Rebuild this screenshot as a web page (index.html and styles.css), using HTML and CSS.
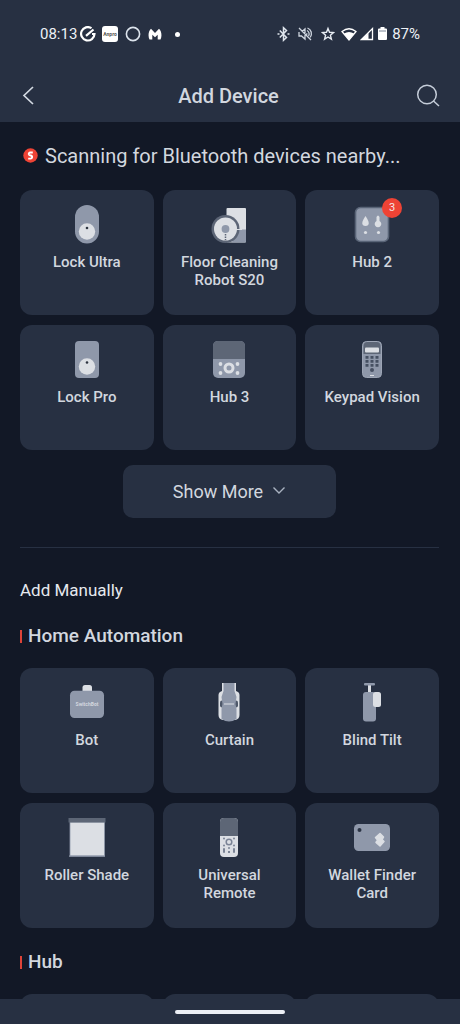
FILE: index.html
```html
<!DOCTYPE html>
<html lang="en">
<head>
<meta charset="utf-8">
<meta name="viewport" content="width=device-width, initial-scale=1">
<title>Add Device</title>
<link rel="stylesheet" href="styles.css">
</head>
<body>
<div class="app">
  <header class="top">
    <div class="status">
      <div class="status-group">
        <span class="clock">08:13</span>
        <svg width="16" height="16" viewBox="0 0 16 16" fill="none" stroke="#fff" stroke-width="2.200"><path d="M11.500 2.200A6.700 6.700 0 1 0 14.500 8H12M6 9.800l7.500-6.300"/></svg>
        <svg class="app-badge" width="16" height="16" viewBox="0 0 16 16"><rect width="16" height="16" rx="3" fill="#fff"/><text x="8" y="10" class="badge-word">Anpro</text></svg>
        <svg class="ring" width="16" height="16" viewBox="0 0 16 16" fill="none" stroke="#dce3ec" stroke-width="1.600"><circle cx="8" cy="8" r="6.600"/></svg>
        <svg width="14" height="16" viewBox="0 0 14 16"><path fill="#fff" d="M1.500 13.500C-.2 10 .4 5.200 3 2.800L7 7l4-4.200c2.600 2.400 3.200 7.200 1.500 10.700H9.700V8.800L7 11.300 4.300 8.800v4.700z"/></svg>
        <span class="more-dot"></span>
      </div>
      <div class="status-group">
        <svg width="13" height="16" viewBox="0 0 13 16" fill="none" stroke="#dfe5ed" stroke-width="1.500"><path d="M2.800 4.500l6.700 7L6.500 14.200V1.800l3 2.700-6.700 7M.5 8h2M10.500 8h2"/></svg>
        <svg class="mute" width="16" height="16" viewBox="0 0 16 16" fill="none" stroke="#cfd6e0" stroke-width="1.300"><path d="M2 2l12 12M2 6v4h2.500L8 13V9M5 5.500L8 3v4M10 4.500c2 1 2.800 3.500 1.600 5.500M10.500 2c4 1.500 5 6 2.700 9.300M9.800 7.300v1.500"/></svg>
        <svg class="star" width="14" height="16" viewBox="0 0 14 16" fill="none" stroke="#e6ebf2" stroke-width="1.400"><path d="M7 2.500l1.500 3.800 4 .3-3.100 2.600 1 4L7 11l-3.400 2.200 1-4L1.500 6.600l4-.3z"/></svg>
        <svg class="wifi" width="16" height="16" viewBox="0 0 16 16"><path d="M1 5.500Q8 0 15 5.500L8 14z" fill="none" stroke="#fff" stroke-width="1.300"/><path d="M3 7.500q5-3 10 0L8 14z" fill="#fff"/></svg>
        <svg width="14" height="16" viewBox="0 0 14 16"><path d="M12.500 2.500v11h-11z" fill="none" stroke="#fff" stroke-width="1.300"/><path d="M8.500 7v6.500h-7z" fill="#fff"/></svg>
        <svg class="battery" width="9" height="16" viewBox="0 0 9 16"><path d="M2.500 1h4v1.500h1.500q1 0 1 1V13q0 1-1 1H1q-1 0-1-1V3.500q0-1 1-1h1.500z" fill="#fff"/><path d="M1 5h7" stroke="#7a8596"/></svg>
        <span class="clock">87%</span>
      </div>
    </div>
    <div class="titlebar">
      <button class="icon-button" type="button" aria-label="Back"><svg width="24" height="24" viewBox="0 0 24 24" fill="none" stroke="#d3d9e2" stroke-width="1.700"><path d="M16 3L7 11.500l9 8.500"/></svg></button>
      <h1>Add Device</h1>
      <button class="icon-button" type="button" aria-label="Search"><svg width="24" height="24" viewBox="0 0 24 24" fill="none" stroke="#c5cdd9" stroke-width="1.500"><circle cx="11" cy="10.500" r="9.300"/><path d="M17.500 17l5.500 5"/></svg></button>
    </div>
  </header>

  <main class="content">
    <p class="scan">
      <svg width="15" height="16" viewBox="0 0 15 16"><circle cx="7.500" cy="7.500" r="7.200" fill="#ee4335"/><path d="M9.800 4.500H7.200Q5.600 4.700 5.800 6.200 6 7.300 7.600 7.500 9.300 7.800 9.100 9.300 8.900 10.500 7.500 10.600H5.200" fill="none" stroke="#fff" stroke-width="1.900"/></svg>
      <span>Scanning for Bluetooth devices nearby...</span>
    </p>

    <div class="grid">
      <button class="card" type="button">
        <svg class="art" viewBox="0 0 48 40"><rect x="12" y="1" width="24" height="38.500" rx="12" fill="#8f98aa"/><circle cx="24" cy="27.500" r="8.200" fill="#dcdfe4"/><circle cx="24" cy="24" r="1.300" fill="#2d3440"/></svg>
        <span>Lock Ultra</span>
      </button>
      <button class="card" type="button">
        <svg class="art" viewBox="0 0 48 40"><rect x="21.500" y="4" width="19.500" height="34.500" rx="1" fill="#dcdfe4"/><path d="M30 25.500h11v12q0 1-1 1H27z" fill="#8f98aa"/><circle cx="20.500" cy="25" r="14" fill="#5c6576"/><circle cx="20.500" cy="25" r="11.500" fill="#dcdfe4"/><circle cx="20.500" cy="25" r="3.900" fill="#8f98aa"/><path d="M20.500 30v6" stroke="#5c6576" stroke-width="1.500" stroke-dasharray="1.500 1"/><path d="M31 25.500h6" stroke="#dcdfe4" stroke-width="1"/></svg>
        <span>Floor Cleaning Robot S20</span>
      </button>
      <button class="card" type="button">
        <span class="art-wrap">
          <svg class="art" viewBox="0 0 48 40"><rect x="7.500" y="3.500" width="33" height="34" rx="5" fill="#8f98aa" stroke="#596477" stroke-width="1.600"/><path d="M17.500 12q-6.500 9.500 0 10 6.500-.5 0-10z" fill="#dcdfe4"/><path d="M28.500 17v-4q1.500-3 3 0v4a3.300 3.300 0 1 1-3 0z" fill="#dcdfe4"/><circle cx="17.500" cy="28.500" r="1.600" fill="#dcdfe4"/><circle cx="30.500" cy="28.500" r="1.600" fill="#dcdfe4"/></svg>
          <span class="count">3</span>
        </span>
        <span>Hub 2</span>
      </button>
      <button class="card" type="button">
        <svg class="art" viewBox="0 0 48 40"><rect x="12" y="2" width="24" height="37" rx="4" fill="#8f98aa"/><circle cx="24" cy="27.500" r="8.200" fill="#dcdfe4"/><circle cx="24" cy="23.500" r="1.300" fill="#2d3440"/></svg>
        <span>Lock Pro</span>
      </button>
      <button class="card" type="button">
        <svg class="art" viewBox="0 0 48 40"><rect x="8" y="2" width="32" height="37" rx="5" fill="#8f98aa"/><path d="M8 20V7q0-5 5-5h22q5 0 5 5v13z" fill="#5d6676"/><circle cx="24" cy="29" r="4" fill="none" stroke="#dcdfe4" stroke-width="3"/><g fill="#dcdfe4"><circle cx="15.500" cy="25" r="1.900"/><circle cx="32.500" cy="25" r="1.900"/><circle cx="15.500" cy="34" r="1.900"/><circle cx="32.500" cy="34" r="1.900"/></g></svg>
        <span>Hub 3</span>
      </button>
      <button class="card" type="button">
        <svg class="art" viewBox="0 0 48 40"><rect x="14.500" y="2.500" width="19" height="36" rx="4" fill="#8f98aa" stroke="#9da5b5"/><path d="M15.500 15V7q0-4 4-4h9q4 0 4 4v8z" fill="#5d6676"/><rect x="17" y="8.500" width="14" height="5" rx="1" fill="#dcdfe4"/><path d="M19 17v11M24 17v11M29 17v11" stroke="#465062" stroke-width="3" stroke-dasharray="2.800 1.200"/><circle cx="24" cy="31" r="2" fill="#465062"/><path d="M22 36.500h4" stroke="#dcdfe4"/></svg>
        <span>Keypad Vision</span>
      </button>
    </div>

    <button class="show-more" type="button">Show More
      <svg width="14" height="14" viewBox="0 0 14 14" fill="none" stroke="#a9b2c0" stroke-width="1.400"><path d="M1.500 2.500L7 8l5.500-5.500"/></svg>
    </button>

    <hr class="rule">

    <h2 class="manual">Add Manually</h2>
    <h3 class="section">Home Automation</h3>
    <div class="grid">
      <button class="card" type="button">
        <svg class="art" viewBox="0 0 48 40"><rect x="19.500" y="3" width="9.500" height="8" rx="2.500" fill="#dcdfe4"/><rect x="7" y="8.700" width="34" height="27.300" rx="4.500" fill="#8f98aa"/><text x="24" y="23.500" class="brand">SwitchBot</text></svg>
        <span>Bot</span>
      </button>
      <button class="card" type="button">
        <svg class="art" viewBox="0 0 48 40"><path d="M17 1h14v8q3.500 1 3.500 4v20q0 4-4 5h-13q-4-1-4-5V13q0-3 3.500-4z" fill="#dcdfe4"/><rect x="15" y="18.500" width="18" height="7" rx="2" fill="#4d5769"/><path d="M18.500 1h11v8l2 6-1 7 1 5v10q-7.500 5-15 0V27l1-5-1-7 2-6z" fill="#8f98aa"/><path d="M19 22h10" stroke="#c3c8d2" stroke-width="1.500"/></svg>
        <span>Curtain</span>
      </button>
      <button class="card" type="button">
        <svg class="art" viewBox="0 0 48 40"><path d="M21.500 3v8" stroke="#dcdfe4" stroke-width="3"/><rect x="16" y="1" width="11" height="2.500" rx="1" fill="#8f98aa"/><rect x="15" y="10" width="13" height="29.500" rx="3" fill="#8f98aa"/><rect x="25" y="10" width="8" height="15" rx="2.500" fill="#dcdfe4"/></svg>
        <span>Blind Tilt</span>
      </button>
      <button class="card" type="button">
        <svg class="art" viewBox="0 0 48 40"><rect x="7" y="5" width="34.500" height="34" fill="#dcdfe4" stroke="#8f98aa" stroke-width=".8"/><rect x="5.500" y="1" width="37" height="4.500" fill="#5d6676"/><path d="M6 39.200h36" stroke="#8f98aa" stroke-width="1.200"/></svg>
        <span>Roller Shade</span>
      </button>
      <button class="card" type="button">
        <svg class="art" viewBox="0 0 48 40"><rect x="15" y="1" width="18" height="39" rx="4" fill="#dcdfe4"/><path d="M15 19V5q0-4 4-4h10q4 0 4 4v14z" fill="#5d6676"/><circle cx="24" cy="25" r="2.800" fill="none" stroke="#7b8496" stroke-width="1.500"/><g fill="#7b8496"><circle cx="19" cy="21.500" r="1"/><circle cx="29" cy="21.500" r="1"/><circle cx="19" cy="28.500" r="1"/><circle cx="29" cy="28.500" r="1"/><circle cx="24" cy="31" r="1"/><rect x="18" y="31" width="2" height="5" rx="1"/><rect x="28" y="31" width="2" height="5" rx="1"/><rect x="23" y="34" width="2" height="2"/></g></svg>
        <span>Universal Remote</span>
      </button>
      <button class="card" type="button">
        <svg class="art" viewBox="0 0 48 40"><rect x="6" y="7" width="36" height="27" rx="4.500" fill="#8f98aa"/><circle cx="11.500" cy="13" r="2" fill="#2a3343"/><path d="M32 16.500l3.500 3.500-1.500 2.500 2 2-4 4.500-4-3.500 1.500-2.500-2-2.500z" fill="#dcdfe4" stroke="#dcdfe4" stroke-width="1.500" stroke-linejoin="round"/></svg>
        <span>Wallet Finder Card</span>
      </button>
    </div>

    <h3 class="section">Hub</h3>
    <div class="grid">
      <button class="card" type="button" aria-label="Hub device 1"></button>
      <button class="card" type="button" aria-label="Hub device 2"></button>
      <button class="card" type="button" aria-label="Hub device 3"></button>
    </div>
  </main>

  <footer class="gesture"><span class="handle"></span></footer>
</div>
</body>
</html>
```
FILE: styles.css
```css
* { box-sizing: border-box; }

body {
  margin: 0;
  background: #121826;
  color: #d2d7df;
  font-family: Roboto, "Liberation Sans", sans-serif;
}

button {
  margin: 0;
  padding: 0;
  border: 0;
  background: none;
  color: inherit;
  font: inherit;
}

h1, h2, h3, p { margin: 0; }
svg { display: block; flex: none; }

.app {
  display: flex;
  flex-direction: column;
  height: 100vh;
}

.top { flex: none; background: #273042; }

.status {
  display: flex;
  justify-content: space-between;
  padding: 24px 40px 0;
}

.status-group {
  display: flex;
  align-items: center;
  height: 20px;
  gap: 3px;
}

.clock { font-size: 15px; line-height: 20px; color: #edf1f6; }
.app-badge { margin-left: 3px; }
.badge-word { font-size: 5px; font-weight: 700; fill: #555; text-anchor: middle; }
.ring { margin: 0 4px; }
.more-dot { width: 5px; height: 5px; margin-left: 10px; border-radius: 50%; background: #fff; }
.mute { margin-left: 4px; }
.star { margin-left: 5px; }
.wifi { margin-left: 3px; }
.battery { margin: 0 2px 0 1px; }

.titlebar {
  display: flex;
  align-items: center;
  justify-content: space-between;
  padding: 32px 20px 6px 17px;
}

.titlebar h1 { font-size: 20px; line-height: 40px; font-weight: 500; }
.icon-button { display: grid; place-items: center; width: 24px; height: 40px; }

.content {
  flex: 1;
  min-height: 0;
  overflow: hidden;
  padding: 22px 21px 0 20px;
}

.scan {
  display: flex;
  align-items: center;
  gap: 7px;
  margin: 0 0 22px 3px;
  font-size: 20px;
  line-height: 24px;
}

.grid {
  display: grid;
  grid-template-columns: repeat(3, 1fr);
  gap: 10px 9px;
}

.card {
  display: flex;
  flex-direction: column;
  align-items: center;
  gap: 9px;
  min-height: 125px;
  padding: 14px 12px;
  border-radius: 12px;
  background: #273042;
  font-size: 15px;
  font-weight: 500;
  line-height: 18px;
  text-align: center;
}

.art { width: 48px; height: 40px; }
.art-wrap { position: relative; }
.brand { font-size: 5px; font-weight: 700; fill: #d3d7df; text-anchor: middle; }

.count {
  position: absolute;
  top: -6px;
  right: -6px;
  width: 20px;
  border-radius: 10px;
  background: #ee4335;
  color: #f3e6e6;
  font-size: 11px;
  font-weight: 400;
  line-height: 20px;
}

.show-more {
  display: flex;
  align-items: center;
  justify-content: center;
  gap: 9px;
  width: 51%;
  height: 53px;
  margin: 15px auto 29px;
  border-radius: 10px;
  background: #273042;
  font-size: 18px;
}

.rule { height: 1px; margin: 0 0 30px; border: 0; background: #273042; }
.manual { font-size: 17px; font-weight: 400; line-height: 24px; color: #e6e9ee; }

.section {
  display: flex;
  align-items: center;
  gap: 6px;
  margin: 22px 0 20px;
  font-size: 19px;
  font-weight: 500;
  line-height: 24px;
}

.section::before { content: ""; width: 2px; height: 13px; background: #dc4338; }

.gesture {
  display: grid;
  place-items: center;
  flex: none;
  height: 25px;
  background: #273042;
}

.handle { width: 24%; height: 4px; border-radius: 2px; background: #eceff5; }
```
